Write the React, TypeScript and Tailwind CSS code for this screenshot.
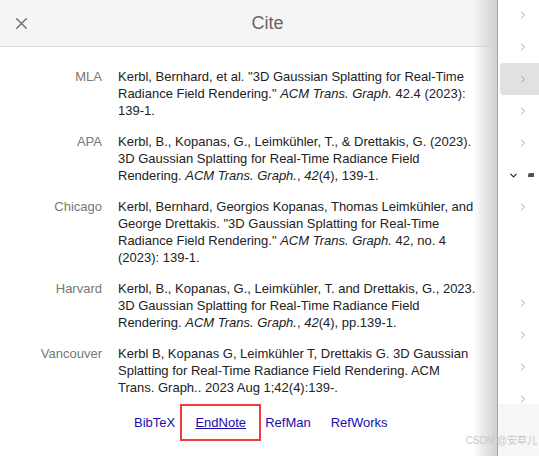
import { X, ChevronRight, ChevronDown } from "lucide-react";

type Citation = {
    label: string;
    parts: { text: string; italic?: boolean }[];
};

const citations: Citation[] = [
    {
        label: "MLA",
        parts: [
            { text: 'Kerbl, Bernhard, et al. "3D Gaussian Splatting for Real-Time Radiance Field Rendering." ' },
            { text: "ACM Trans. Graph.", italic: true },
            { text: " 42.4 (2023): 139-1." },
        ],
    },
    {
        label: "APA",
        parts: [
            { text: "Kerbl, B., Kopanas, G., Leimkühler, T., & Drettakis, G. (2023). 3D Gaussian Splatting for Real-Time Radiance Field Rendering. " },
            { text: "ACM Trans. Graph.", italic: true },
            { text: ", " },
            { text: "42", italic: true },
            { text: "(4), 139-1." },
        ],
    },
    {
        label: "Chicago",
        parts: [
            { text: 'Kerbl, Bernhard, Georgios Kopanas, Thomas Leimkühler, and George Drettakis. "3D Gaussian Splatting for Real-Time Radiance Field Rendering." ' },
            { text: "ACM Trans. Graph.", italic: true },
            { text: " 42, no. 4 (2023): 139-1." },
        ],
    },
    {
        label: "Harvard",
        parts: [
            { text: "Kerbl, B., Kopanas, G., Leimkühler, T. and Drettakis, G., 2023. 3D Gaussian Splatting for Real-Time Radiance Field Rendering. " },
            { text: "ACM Trans. Graph.", italic: true },
            { text: ", " },
            { text: "42", italic: true },
            { text: "(4), pp.139-1." },
        ],
    },
    {
        label: "Vancouver",
        parts: [
            { text: "Kerbl B, Kopanas G, Leimkühler T, Drettakis G. 3D Gaussian Splatting for Real-Time Radiance Field Rendering. ACM Trans. Graph.. 2023 Aug 1;42(4):139-." },
        ],
    },
];

const sideRows = [
    { h: "h-[32px]", kind: "right" },
    { h: "h-[32px]", kind: "right" },
    { h: "h-[32px]", kind: "active" },
    { h: "h-[32px]", kind: "right" },
    { h: "h-[32px]", kind: "right" },
    { h: "h-[32px]", kind: "down" },
    { h: "h-[32px]", kind: "right" },
    { h: "h-[64px]", kind: "empty" },
    { h: "h-[32px]", kind: "right" },
    { h: "h-[32px]", kind: "right" },
    { h: "h-[32px]", kind: "right" },
    { h: "h-[21px]", kind: "last" },
];

function SidePanel() {
    return (
        <div className="relative flex-1 bg-white flex flex-col">
            <div className="flex flex-col -mt-[1px]">
                {sideRows.map((row, i) => (
                    <div
                        key={i}
                        className={`${row.h} flex ${row.kind === "last" ? "items-start pt-[10px]" : "items-center"} ${row.kind === "active" ? "bg-[#e1e1e1] rounded-l-[4px] ml-[2px]" : ""}`}
                    >
                        {(row.kind === "right" || row.kind === "last") && (
                            <ChevronRight className="ml-[19px] text-[#8a8a8a]" size={12} strokeWidth={1.6} />
                        )}
                        {row.kind === "active" && (
                            <ChevronRight className="ml-[17px] text-[#8a8a8a]" size={12} strokeWidth={1.6} />
                        )}
                        {row.kind === "down" && (
                            <div className="flex items-center">
                                <ChevronDown className="ml-[10px] text-[#222]" size={11} strokeWidth={2.4} />
                                <div className="ml-[9px] w-[6px] h-[4px] bg-[#555] rounded-tl-[2px]" />
                            </div>
                        )}
                    </div>
                ))}
            </div>
            <div className="flex-1 bg-[#f7f7f7]" />
        </div>
    );
}

export default function App() {
    return (
        <div
            className="relative w-[539px] h-[456px] flex overflow-hidden bg-white"
            style={{ fontFamily: '"Liberation Sans", Arial, sans-serif' }}
        >
            <div className="relative w-[498px] h-full bg-white flex flex-col border-r border-[#a8a8a8]">
                <div className="h-[47px] bg-[#f5f5f5] border-b border-[#d9d9d9] flex items-center relative">
                    <X className="ml-[12px] text-[#666]" size={19} strokeWidth={1.6} />
                    <div className="absolute inset-0 flex items-center justify-center text-[18px] text-[#666] pl-[38px]">
                        Cite
                    </div>
                </div>

                <div className="flex flex-col gap-[14px] pt-[21px]">
                    {citations.map((c) => (
                        <div key={c.label} className="flex text-[13px] leading-[17px]">
                            <div className="w-[102px] text-right text-[#777]">{c.label}</div>
                            <div className="ml-[16px] w-[359px] text-[#222]">
                                {c.parts.map((p, i) =>
                                    p.italic ? (
                                        <i key={i}>{p.text}</i>
                                    ) : (
                                        <span key={i}>{p.text}</span>
                                    )
                                )}
                            </div>
                        </div>
                    ))}
                </div>

                <div className="flex items-center text-[13px] text-[#1a0dab] mt-[8px] ml-[134px]">
                    <span>BibTeX</span>
                    <div className="ml-[5px] border-[2px] border-[#f03c3c] w-[81px] h-[37px] flex items-center justify-center">
                        <span className="underline">EndNote</span>
                    </div>
                    <span className="ml-[4px]">RefMan</span>
                    <span className="ml-[20px]">RefWorks</span>
                </div>

                <div className="pointer-events-none absolute top-0 right-0 h-full w-[24px] bg-gradient-to-r from-transparent to-[#cfcfcf]" />
            </div>

            <SidePanel />

            <div className="absolute right-[2px] bottom-[8px] text-[10px] text-[#c8c8c8]" style={{ fontFamily: '"Liberation Sans", "Noto Sans CJK SC", sans-serif' }}>
                CSDN @安草儿
            </div>
        </div>
    );
}
